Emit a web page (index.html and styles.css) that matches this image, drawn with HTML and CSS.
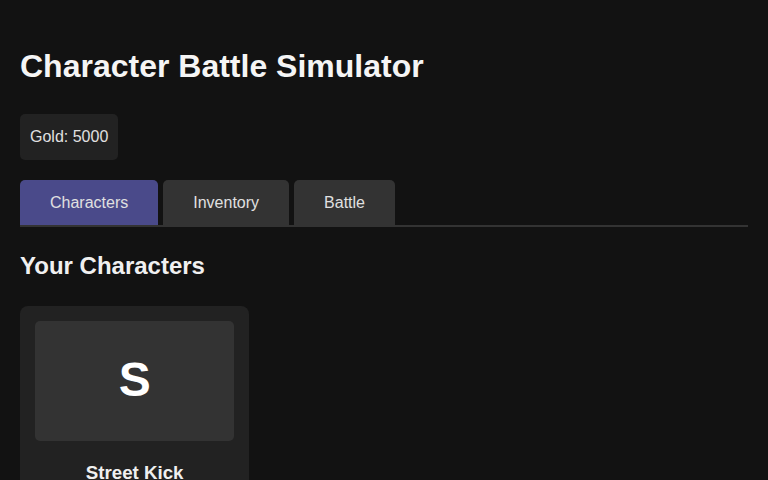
FILE: index.html
```html
<!DOCTYPE html>
<html>
<head>
<meta charset="utf-8">
<link rel="stylesheet" href="styles.css">
</head>
<body>
<div class="app">
  <h1 class="title">Character Battle Simulator</h1>
  <div class="gold">Gold: 5000</div>
  <div class="tabs">
    <button class="tab active">Characters</button>
    <button class="tab">Inventory</button>
    <button class="tab">Battle</button>
  </div>
  <h2 class="section-title">Your Characters</h2>
  <div class="grid">
    <div class="card">
      <div class="portrait">S</div>
      <h3 class="name">Street Kick</h3>
    </div>
  </div>
</div>
</body>
</html>
```
FILE: styles.css
```css
html, body {
  margin: 0;
  background: #121212;
}
body {
  font-family: "Liberation Sans", Arial, sans-serif;
  color: #e0e0e0;
  line-height: 1.6;
  padding: 20px;
}
.title {
  font-size: 32px;
  color: #f5f5f5;
  margin: 21px 0 22px;
}
.gold {
  display: inline-block;
  background: #222;
  border-radius: 5px;
  padding: 10px;
  font-size: 16px;
  margin-bottom: 20px;
}
.tabs {
  display: flex;
  gap: 5px;
  border-bottom: 2px solid #333;
}
.tab {
  font-family: inherit;
  font-size: 16px;
  line-height: 1.6;
  color: #e0e0e0;
  background: #333;
  border: none;
  border-radius: 5px 5px 0 0;
  padding: 10px 30px;
}
.tab.active {
  background: #4a4a8a;
}
.section-title {
  font-size: 24px;
  color: #f0f0f0;
  margin: 20px 0;
}
.grid {
  display: grid;
  grid-template-columns: repeat(auto-fill, minmax(220px, 1fr));
  gap: 20px;
}
.card {
  background: #222;
  border-radius: 8px;
  padding: 15px;
  text-align: center;
}
.portrait {
  height: 120px;
  background: #333;
  border-radius: 5px;
  display: flex;
  align-items: center;
  justify-content: center;
  font-size: 48px;
  font-weight: bold;
  color: #fff;
}
.name {
  font-size: 18.72px;
  color: #f0f0f0;
  margin: 17px 0 10px;
}
```
